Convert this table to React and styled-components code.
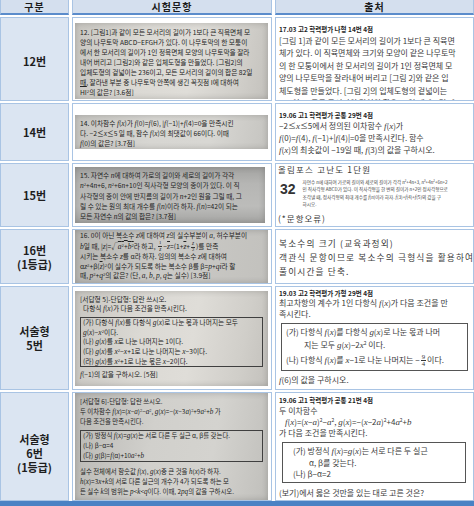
import React from 'react';
import styled, { createGlobalStyle } from 'styled-components';

const Global = createGlobalStyle`
  html, body { margin: 0; padding: 0; background: #fff; }
  body {
    width: 474px; height: 506px; overflow: hidden;
    font-family: "Noto Sans CJK KR", "Noto Sans", sans-serif;
    color: #222;
  }
`;

const Table = styled.div`
  display: grid;
  grid-template-columns: 69px 200px 199px;
  grid-template-rows: 15px 84px 58px 64px 55px 104px 109px;
  column-gap: 3px;
  row-gap: 2px;
  width: 474px;
  border-bottom: 5px solid #4a82c4;
  background: #fff;
`;

const HeadCell = styled.div`
  background: #d4dfee;
  border: 1px solid #a9c4e4;
  border-top: none;
  border-bottom: 2px solid #5b8ccb;
  display: flex;
  align-items: center;
  justify-content: center;
  font-weight: 700;
  font-size: 10px;
  letter-spacing: 1px;
  color: #1b1b1b;
`;

const LabelCell = styled.div`
  background: #dbe5f2;
  border: 1px solid #a9c4e4;
  display: flex;
  align-items: center;
  justify-content: center;
  text-align: center;
  font-weight: 700;
  font-size: 11px;
  line-height: 14px;
  color: #1e1e1e;
  padding-top: ${p => p.$pt || 0}px;
`;

const MidCell = styled.div`
  border: 1px solid #a9c4e4;
  display: flex;
  align-items: center;
  justify-content: flex-start;
  padding: ${p => p.$pad || '0 2px'};
  overflow: hidden;
`;

const SrcCell = styled.div`
  border: 1px solid #a9c4e4;
  padding: ${p => p.$pad || '5px 3px 0 3px'};
  overflow: hidden;
  font-size: 8px;
  line-height: ${p => p.$lh || 12.4}px;
  color: #3a3a3a;
  white-space: nowrap;
`;

const SrcTitle = styled.div`
  font-weight: 700;
  font-size: 6.5px;
  line-height: 10px;
  color: #1e1e1e;
  margin-bottom: ${p => p.$mb || 0}px;
`;

const Line = styled.div`
  padding-left: ${p => p.$indent || 0}px;
  line-height: ${p => (p.$lh ? `${p.$lh}px` : 'inherit')};
`;

const M = styled.span`
  font-family: "Liberation Serif", "DejaVu Serif", serif;
  font-style: italic;
  font-size: 1.12em;
  line-height: 1;
`;

const Sup = styled.sup`
  font-size: 0.62em;
  line-height: 0;
  vertical-align: 0.55em;
`;

const Over = styled.span`
  text-decoration: overline;
`;

const Frac = styled.span`
  display: inline-flex;
  flex-direction: column;
  align-items: center;
  vertical-align: middle;
  font-family: "Liberation Serif", serif;
  font-size: ${p => p.$fs || 0.85}em;
  line-height: 0.95;
  margin: 0 1px;
  & > span:first-child { border-bottom: 0.6px solid #333; padding: 0 1px; }
`;

const CondBox = styled.div`
  border: 1px solid #555;
  margin: ${p => p.$m || '3px 0 3px 2px'};
  padding: ${p => p.$pad || '3px 6px'};
  line-height: ${p => p.$lh || 13}px;
`;

const Scan = styled.div`
  width: ${p => p.$w || 193}px;
  height: ${p => p.$h}px;
  background: ${p => p.$bg};
  padding: ${p => p.$pad || '4px 5px'};
  box-sizing: border-box;
  font-family: "Noto Sans CJK KR", sans-serif;
  font-size: ${p => p.$fs || 6.7}px;
  line-height: ${p => p.$lh || 10}px;
  color: #232323;
  overflow: hidden;
  white-space: nowrap;
  box-shadow: inset 0 0 6px rgba(0, 0, 0, 0.2);
`;

const ScanBox = styled.div`
  border: 1px solid #3f3f3f;
  margin: ${p => p.$m || '2px 0'};
  padding: 0 2px;
`;

const ProbRow = styled.div`
  display: flex;
  gap: 7px;
  align-items: flex-start;
  margin: 4px 0 3px 2px;
`;

const ProbNum = styled.div`
  font-family: "Liberation Sans", sans-serif;
  font-weight: 700;
  font-size: 14px;
  line-height: 14px;
  color: #333;
  padding-top: 3px;
`;

const Tiny = styled.div`
  font-size: 4.6px;
  line-height: 7.4px;
  color: #444;
`;

const Spaced = styled.div`
  font-size: ${p => p.$fs || 9}px;
  letter-spacing: ${p => p.$ls || 1}px;
  line-height: ${p => p.$lh || 14}px;
  color: #3a3a3a;
`;

const light = 'linear-gradient(100deg, #c8c6c1 0%, #dbd9d4 35%, #dfddd8 60%, #d0cec9 85%, #c3c1bc 100%)';
const lightB = 'linear-gradient(100deg, #c6c5c1 0%, #d7d6d2 40%, #d8d7d3 70%, #c5c4c0 100%)';
const dark = 'linear-gradient(180deg, #a2a2a0 0%, #b6b6b4 30%, #bcbcba 70%, #a5a5a3 100%)';
const mid = 'linear-gradient(100deg, #b5b4b0 0%, #cbcac7 45%, #c2c1bd 100%)';
const s6 = 'linear-gradient(100deg, #b9b8b4 0%, #d1d0cc 40%, #d4d3cf 70%, #c0bfbb 100%)';

export default function App() {
  return (
    <>
      <Global />
      <Table>
        <HeadCell>구분</HeadCell>
        <HeadCell>시험문항</HeadCell>
        <HeadCell>출처</HeadCell>

        {/* 12번 */}
        <LabelCell $pt={4}>12번</LabelCell>
        <MidCell $pad="4px 2px 0 2px">
          <Scan $h={76} $bg={light}>
            <Line>12. [그림1]과 같이 모든 모서리의 길이가 1보다 큰 직육면체 모</Line>
            <Line>양의 나무토막 ABCD−EFGH가 있다. 이 나무토막의 한 모퉁이</Line>
            <Line>에서 한 모서리의 길이가 1인 정육면체 모양의 나무토막을 잘라</Line>
            <Line>내어 버리고 [그림2]와 같은 입체도형을 만들었다. [그림2]의</Line>
            <Line>입체도형의 겉넓이는 236이고, 모든 모서리의 길이의 합은 82일</Line>
            <Line>때, 잘라낸 부분 중 나무토막 안쪽에 생긴 꼭짓점 I에 대하여</Line>
            <Line><Over>HI</Over><Sup>2</Sup>의 값은? [3.6점]</Line>
          </Scan>
        </MidCell>
        <SrcCell $pad="6px 3px 0 3px">
          <SrcTitle $mb={1}>17.03 고2 학력평가 나형 14번 4점</SrcTitle>
          <Line>[그림 1]과 같이 모든 모서리의 길이가 1보다 큰 직육면</Line>
          <Line>체가 있다. 이 직육면체와 크기와 모양이 같은 나무토막</Line>
          <Line>의 한 모퉁이에서 한 모서리의 길이가 1인 정육면체 모</Line>
          <Line>양의 나무토막을 잘라내어 버리고 [그림 2]와 같은 입</Line>
          <Line>체도형을 만들었다. [그림 2]의 입체도형의 겉넓이는</Line>
          <Line>236이고, 모든 모서리의 길이의 합은 82일 때, [그림 1]</Line>
          <Line>에서 직육면체의 대각선의 길이는?</Line>
        </SrcCell>

        {/* 14번 */}
        <LabelCell>14번</LabelCell>
        <MidCell>
          <Scan $h={34} $bg={lightB} $pad="3px 5px">
            <Line>14. 이차함수 <M>f</M>(<M>x</M>)가 <M>f</M>(0)=<M>f</M>(6), |<M>f</M>(−1)|+<M>f</M>(4)=0을 만족시킨</Line>
            <Line>다. −2≤<M>x</M>≤5 일 때, 함수 <M>f</M>(<M>x</M>)의 최댓값이 66이다. 이때</Line>
            <Line><M>f</M>(0)의 값은? [3.7점]</Line>
          </Scan>
        </MidCell>
        <SrcCell $pad="6px 3px 0 3px" $lh={12}>
          <SrcTitle>19.06 고1 학력평가 공통 29번 4점</SrcTitle>
          <Line>−2≤<M>x</M>≤5에서 정의된 이차함수 <M>f</M>(<M>x</M>)가</Line>
          <Line><M>f</M>(0)=<M>f</M>(4), <M>f</M>(−1)+|<M>f</M>(4)|=0을 만족시킨다. 함수</Line>
          <Line><M>f</M>(<M>x</M>)의 최솟값이 −19일 때, <M>f</M>(3)의 값을 구하시오.</Line>
        </SrcCell>

        {/* 15번 */}
        <LabelCell>15번</LabelCell>
        <MidCell>
          <Scan $h={56} $w={190} $bg={dark} $lh={10.3} $pad="3px 5px">
            <Line>15. 자연수 <M>n</M>에 대하여 가로의 길이와 세로의 길이가 각각</Line>
            <Line><M>n</M><Sup>2</Sup>+4<M>n</M>+6, <M>n</M><Sup>2</Sup>+6<M>n</M>+10인 직사각형 모양의 종이가 있다. 이 직</Line>
            <Line>사각형의 종이 안에 반지름의 길이가 <M>n</M>+2인 원을 그릴 때, 그</Line>
            <Line>릴 수 있는 원의 최대 개수를 <M>f</M>(<M>n</M>)이라 하자. <M>f</M>(<M>n</M>)=42이 되는</Line>
            <Line>모든 자연수 <M>n</M>의 값의 합은? [3.7점]</Line>
          </Scan>
        </MidCell>
        <SrcCell $pad="0 3px 0 2px" $lh={10}>
          <Spaced $fs={8.5} $ls={1.2} $lh={11}>올림포스 고난도 1단원</Spaced>
          <ProbRow>
            <ProbNum>32</ProbNum>
            <Tiny>
              <div>자연수 <M>n</M>에 대하여 가로의 길이와 세로의 길이가 각각 <M>n</M><Sup>2</Sup>+4<M>n</M>+3, <M>n</M><Sup>3</Sup>+4<M>n</M><Sup>2</Sup>+6<M>n</M>+2</div>
              <div>인 직사각형 ABCD가 있다. 이 직사각형을 한 변의 길이가 <M>n</M>+2인 정사각형으로</div>
              <div>조각낼 때, 정사각형의 최대 개수를 <M>f</M>(<M>n</M>)이라 하자. <M>f</M>(3)+<M>f</M>(4)+<M>f</M>(5)의 값을 구</div>
              <div>하시오.</div>
            </Tiny>
          </ProbRow>
          <Spaced $fs={8.5} $ls={1} $lh={12}>(*문항오류)</Spaced>
        </SrcCell>

        {/* 16번 */}
        <LabelCell>16번<br />(1등급)</LabelCell>
        <MidCell $pad="0 2px">
          <Scan $h={53} $bg={mid} $lh={9.6} $pad="1px 5px">
            <Line>16. 0이 아닌 복소수 <M>z</M>에 대하여 <M>z</M>의 실수부분이 <M>a</M>, 허수부분이</Line>
            <Line $lh={11}><M>b</M>일 때, |<M>z</M>|=√<Over><M>a</M><Sup>2</Sup>+<M>b</M><Sup>2</Sup></Over>라 하고, <Frac $fs={0.7}><span>1</span><span><M>z</M></span></Frac>−<Over><M>z</M></Over>=(1+<Over><M>z</M></Over>+<Frac $fs={0.7}><span><M>z</M></span><span>2</span></Frac>)를 만족</Line>
            <Line>시키는 복소수 <M>z</M>를 α라 하자. 임의의 복소수 <M>z</M>에 대하여</Line>
            <Line>α<M>z</M><Sup>2</Sup>+β(<Over><M>z</M></Over>)<Sup>2</Sup>이 실수가 되도록 하는 복소수 β를 β=<M>p</M>+<M>qi</M>라 할</Line>
            <Line>때, <M>p</M><Sup>2</Sup>+<M>q</M><Sup>2</Sup>의 값은? (단, <M>a</M>, <M>b</M>, <M>p</M>, <M>q</M>는 실수) [3.9점]</Line>
          </Scan>
        </MidCell>
        <SrcCell $pad="7px 3px 0 3px">
          <Spaced $fs={8.7} $ls={1.15} $lh={14}>
            <div>복소수의 크기 (교육과정외)</div>
            <div>객관식 문항이므로 복소수의 극형식을 활용하여</div>
            <div>풀이시간을 단축.</div>
          </Spaced>
        </SrcCell>

        {/* 서술형 5번 */}
        <LabelCell>서술형<br />5번</LabelCell>
        <MidCell>
          <Scan $h={95} $bg={light} $lh={9.7} $pad="4px 5px">
            <Line>[서답형 5]-단답형: 답란 쓰시오.</Line>
            <Line $indent={3}>다항식 <M>f</M>(<M>x</M>)가 다음 조건을 만족시킨다.</Line>
            <ScanBox $m="3px 0 3px 0">
              <Line>(가) 다항식 <M>f</M>(<M>x</M>)를 다항식 <M>g</M>(<M>x</M>)로 나눈 몫과 나머지는 모두</Line>
              <Line><M>g</M>(<M>x</M>)−<M>x</M><Sup>2</Sup>이다.</Line>
              <Line>(나) <M>g</M>(<M>x</M>)를 <M>x</M>로 나눈 나머지는 1이다.</Line>
              <Line>(다) <M>g</M>(<M>x</M>)를 <M>x</M><Sup>2</Sup>−<M>x</M>+1로 나눈 나머지는 <M>x</M>−3이다.</Line>
              <Line>(라) <M>g</M>(<M>x</M>)를 <M>x</M><Sup>2</Sup>+1로 나눈 몫은 <M>x</M>−2이다.</Line>
            </ScanBox>
            <Line><M>f</M>(−1)의 값을 구하시오. [5점]</Line>
          </Scan>
        </MidCell>
        <SrcCell $pad="1px 3px 0 3px" $lh={10.5}>
          <SrcTitle>19.03 고2 학력평가 가형 29번 4점</SrcTitle>
          <Line>최고차항의 계수가 1인 다항식 <M>f</M>(<M>x</M>)가 다음 조건을 만</Line>
          <Line>족시킨다.</Line>
          <CondBox $m="4px 2px 3px 2px" $pad="2px 4px" $lh={12.5}>
            <Line>(가) 다항식 <M>f</M>(<M>x</M>)를 다항식 <M>g</M>(<M>x</M>)로 나눈 몫과 나머</Line>
            <Line $indent={18}>지는 모두 <M>g</M>(<M>x</M>)−2<M>x</M><Sup>2</Sup> 이다.</Line>
            <Line $lh={17}>(나) 다항식 <M>f</M>(<M>x</M>)를 <M>x</M>−1로 나눈 나머지는 −<Frac><span>9</span><span>4</span></Frac>이다.</Line>
          </CondBox>
          <Line $lh={12}><M>f</M>(6)의 값을 구하시오.</Line>
        </SrcCell>

        {/* 서술형 6번 */}
        <LabelCell $pt={12}>서술형<br />6번<br />(1등급)</LabelCell>
        <MidCell $pad="0 2px">
          <Scan $h={107} $bg={s6} $fs={6.4} $lh={10} $pad="4px 5px">
            <Line>[서답형 6]-단답형: 답란 쓰시오.</Line>
            <Line>두 이차함수 <M>f</M>(<M>x</M>)=(<M>x</M>−<M>a</M>)<Sup>2</Sup>−<M>a</M><Sup>2</Sup>, <M>g</M>(<M>x</M>)=−(<M>x</M>−3<M>a</M>)<Sup>2</Sup>+9<M>a</M><Sup>2</Sup>+<M>b</M> 가</Line>
            <Line>다음 조건을 만족시킨다.</Line>
            <ScanBox $m="3px 0 5px 0">
              <Line>(가) 방정식 <M>f</M>(<M>x</M>)=<M>g</M>(<M>x</M>)는 서로 다른 두 실근 α, β를 갖는다.</Line>
              <Line>(나) β−α=4</Line>
              <Line>(다) <M>g</M>(β)=<M>f</M>(α)+10<M>a</M><Sup>2</Sup>+<M>b</M></Line>
            </ScanBox>
            <Line>실수 전체에서 함숫값 <M>f</M>(<M>x</M>), <M>g</M>(<M>x</M>)중 큰 것을 <M>h</M>(<M>x</M>)라 하자.</Line>
            <Line><M>h</M>(<M>x</M>)=3<M>x</M>+<M>k</M>의 서로 다른 실근의 개수가 4가 되도록 하는 모</Line>
            <Line>든 실수 <M>k</M>의 범위는 <M>p</M>&lt;<M>k</M>&lt;<M>q</M>이다. 이때, 2<M>pq</M>의 값을 구하시오.</Line>
          </Scan>
        </MidCell>
        <SrcCell $pad="2px 3px 0 3px" $lh={11}>
          <SrcTitle>19.06 고1 학력평가 공통 21번 4점</SrcTitle>
          <Line>두 이차함수</Line>
          <Line $indent={6}><M>f</M>(<M>x</M>)=(<M>x</M>−<M>a</M>)<Sup>2</Sup>−<M>a</M><Sup>2</Sup>, <M>g</M>(<M>x</M>)=−(<M>x</M>−2<M>a</M>)<Sup>2</Sup>+4<M>a</M><Sup>2</Sup>+<M>b</M></Line>
          <Line>가 다음 조건을 만족시킨다.</Line>
          <CondBox $m="4px 4px 4px 3px" $pad="2px 10px" $lh={11.5}>
            <Line>(가) 방정식 <M>f</M>(<M>x</M>)=<M>g</M>(<M>x</M>)는 서로 다른 두 실근</Line>
            <Line $indent={16}>α, β를 갖는다.</Line>
            <Line>(나) β−α=2</Line>
          </CondBox>
          <Line>(보기)에서 옳은 것만을 있는 대로 고른 것은?</Line>
        </SrcCell>
      </Table>
    </>
  );
}
